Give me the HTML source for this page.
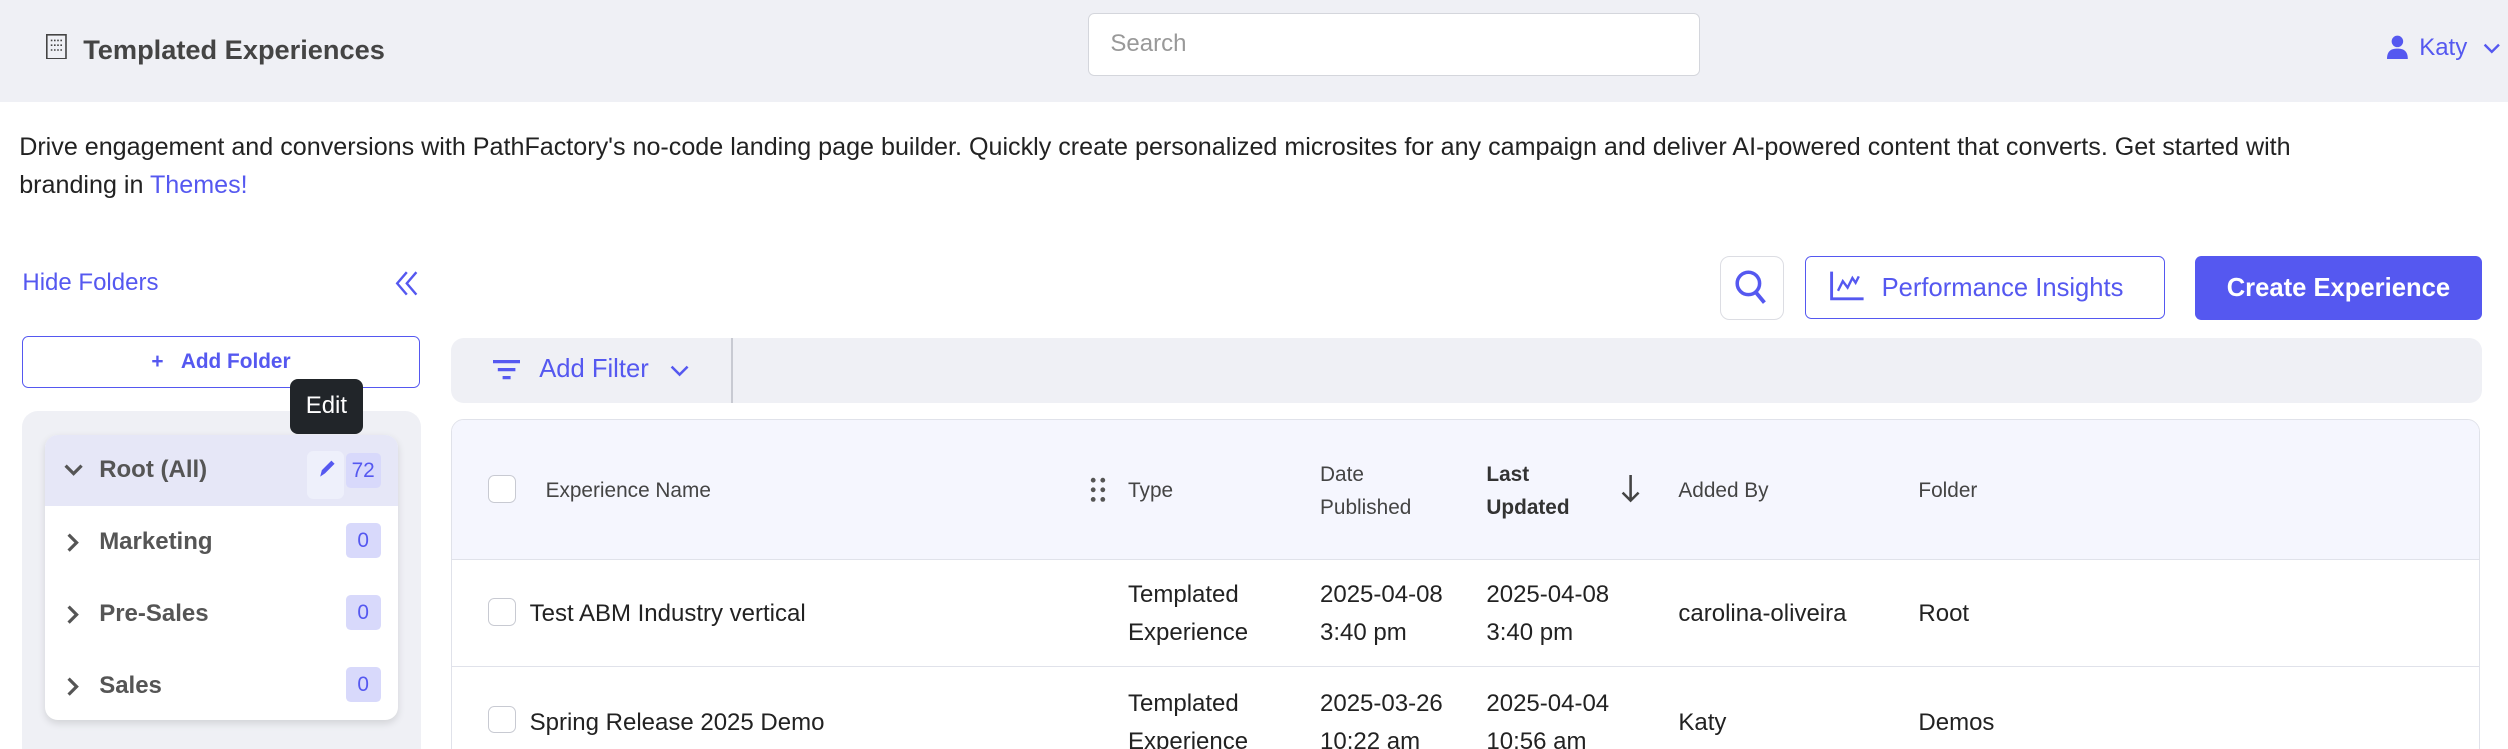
<!DOCTYPE html>
<html><head><meta charset="utf-8"><style>
html,body{margin:0;padding:0;background:#fff;}
body{width:2508px;height:748px;overflow:hidden;font-family:"Liberation Sans",sans-serif;}
#w{zoom:1.6;width:1568px;height:468px;position:relative;overflow:hidden;}
.a{position:absolute;}
.blue{color:#5558f0;}
.hd{background:#eff0f5;left:0;top:0;width:1568px;height:64px;}
.cb{width:16px;height:16px;border:1px solid #c8cad2;border-radius:4px;background:#fff;}
.th{font-size:13px;color:#444;line-height:21px;}
.td{font-size:15px;color:#222;line-height:24px;}
.badge{background:#d8d9fb;color:#5558f0;font-size:13px;border-radius:3px;width:22px;height:22px;text-align:center;line-height:22px;}
.fr{font-size:15px;color:#555;font-weight:bold;}
</style></head><body><div id="w">
<div class="a hd"></div>
<svg class="a" style="left:29px;top:21px" width="14" height="16" viewBox="0 0 14 16"><rect x="0.5" y="0.5" width="12" height="15" fill="none" stroke="#444"/><path d="M3 4h7M3 7h7M3 10h7" stroke="#444" stroke-dasharray="1 1"/></svg>
<div class="a" style="left:52px;top:21px;font-size:17px;font-weight:bold;color:#444">Templated Experiences</div>
<div class="a" style="left:680px;top:8px;width:381px;height:38px;background:#fff;border:1px solid #d4d6dc;border-radius:4px;"></div>
<div class="a" style="left:694px;top:19px;font-size:15px;color:#999">Search</div>
<svg class="a" style="left:1492px;top:22px" width="13" height="15" viewBox="0 0 13 15"><circle cx="6.5" cy="4" r="3.6" fill="#5558f0"/><path d="M0 15c0-5 2.5-6.5 6.5-6.5S13 10 13 15z" fill="#5558f0"/></svg>
<div class="a blue" style="left:1512px;top:21px;font-size:15px">Katy</div>
<svg class="a" style="left:1552px;top:27px" width="11" height="7"><path d="M1 1l4.5 4.5L10 1" stroke="#5558f0" fill="none" stroke-width="1.5"/></svg>
<div class="a" style="left:12px;top:80px;font-size:15.7px;color:#222;line-height:24px;width:1480px">Drive engagement and conversions with PathFactory's no-code landing page builder. Quickly create personalized microsites for any campaign and deliver AI-powered content that converts. Get started with branding in <span class="blue">Themes!</span></div>
<div class="a blue" style="left:14px;top:168px;font-size:15px">Hide Folders</div>
<svg class="a" style="left:246px;top:168px" width="16" height="18"><path d="M8 2L2 9l6 7M14 2L8 9l6 7" stroke="#5558f0" fill="none" stroke-width="1.5"/></svg>
<div class="a" style="left:14px;top:210px;width:247px;height:31px;border:1px solid #5558f0;border-radius:4px;text-align:center;line-height:31px;font-size:13px;font-weight:bold;color:#5558f0">+&nbsp;&nbsp;&nbsp;Add Folder</div>
<div class="a" style="left:14px;top:257px;width:249px;height:230px;background:#eff0f5;border-radius:10px;"></div>
<div class="a" style="left:28px;top:272px;width:221px;height:178px;background:#fff;border-radius:8px;box-shadow:0 2px 5px rgba(0,0,0,.12);overflow:hidden">
<div style="height:44px;background:#e6e7f7"></div></div>
<svg class="a" style="left:40px;top:290px" width="12" height="8"><path d="M1 1l5 5 5-5" stroke="#555" fill="none" stroke-width="2"/></svg>
<div class="a fr" style="left:62px;top:285px">Root (All)</div>
<div class="a" style="left:192px;top:282px;width:23px;height:30px;background:#eef0fb;border-radius:4px"></div>
<svg class="a" style="left:198px;top:287px" width="12" height="12"><path d="M2 11l1-4 6-6 2 2-6 6z" fill="#5558f0"/></svg>
<div class="a badge" style="left:216px;top:283px">72</div>
<svg class="a" style="left:42px;top:333px" width="8" height="12"><path d="M1 1l5 5-5 5" stroke="#555" fill="none" stroke-width="2"/></svg>
<div class="a fr" style="left:62px;top:330px">Marketing</div>
<div class="a badge" style="left:216px;top:327px">0</div>
<svg class="a" style="left:42px;top:378px" width="8" height="12"><path d="M1 1l5 5-5 5" stroke="#555" fill="none" stroke-width="2"/></svg>
<div class="a fr" style="left:62px;top:375px">Pre-Sales</div>
<div class="a badge" style="left:216px;top:372px">0</div>
<svg class="a" style="left:42px;top:423px" width="8" height="12"><path d="M1 1l5 5-5 5" stroke="#555" fill="none" stroke-width="2"/></svg>
<div class="a fr" style="left:62px;top:420px">Sales</div>
<div class="a badge" style="left:216px;top:417px">0</div>
<div class="a" style="left:181px;top:237px;width:46px;height:34px;background:#212529;border-radius:5px;color:#fff;font-size:15px;text-align:center;line-height:34px">Edit</div>
<div class="a" style="left:1075px;top:160px;width:39px;height:39px;border:1px solid #dcdde3;border-radius:6px;background:#fff"></div>
<svg class="a" style="left:1084px;top:168px" width="22" height="24"><circle cx="9" cy="9" r="7" stroke="#5558f0" stroke-width="2.2" fill="none"/><path d="M14 15l5 6" stroke="#5558f0" stroke-width="2.4"/></svg>
<div class="a" style="left:1128px;top:160px;width:224px;height:38px;border:1px solid #5558f0;border-radius:4px;background:#fff"></div>
<svg class="a" style="left:1144px;top:169px" width="22" height="20"><path d="M1 1v17h20" stroke="#5558f0" stroke-width="1.8" fill="none"/><path d="M5 13l3-6 3 4 3-6 2 3 2-4" stroke="#5558f0" stroke-width="1.5" fill="none"/></svg>
<div class="a blue" style="left:1176px;top:171px;font-size:16px">Performance Insights</div>
<div class="a" style="left:1372px;top:160px;width:179px;height:40px;background:#5558f0;border-radius:4px;color:#fff;font-size:16px;font-weight:bold;text-align:center;line-height:40px">Create Experience</div>
<div class="a" style="left:282px;top:211px;width:1269px;height:41px;background:#eff0f5;border-radius:8px"></div>
<div class="a" style="left:457px;top:211px;width:1px;height:41px;background:#c8cad2"></div>
<svg class="a" style="left:308px;top:225px" width="17" height="13"><path d="M0 1h17M3 6h11M6 11h5" stroke="#5558f0" stroke-width="2"/></svg>
<div class="a blue" style="left:337px;top:222px;font-size:16px">Add Filter</div>
<svg class="a" style="left:419px;top:228px" width="12" height="8"><path d="M1 1l5 5 5-5" stroke="#5558f0" fill="none" stroke-width="1.6"/></svg>
<div class="a" style="left:282px;top:262px;width:1267px;height:220px;border:1px solid #e0e2ea;border-radius:8px 8px 0 0;background:#fff;overflow:hidden">
<div style="height:87px;background:#f5f6fe;border-bottom:1px solid #e0e2ea"></div>
<div style="height:66px;border-bottom:1px solid #e0e2ea"></div></div>
<div class="a cb" style="left:305px;top:297px"></div>
<div class="a th" style="left:341px;top:296px">Experience Name</div>
<svg class="a" style="left:681px;top:298px" width="10" height="16"><g fill="#555"><circle cx="2" cy="2" r="1.5"/><circle cx="8" cy="2" r="1.5"/><circle cx="2" cy="8" r="1.5"/><circle cx="8" cy="8" r="1.5"/><circle cx="2" cy="14" r="1.5"/><circle cx="8" cy="14" r="1.5"/></g></svg>
<div class="a th" style="left:705px;top:296px">Type</div>
<div class="a th" style="left:825px;top:286px">Date<br>Published</div>
<div class="a th" style="left:929px;top:286px;font-weight:bold;color:#333">Last<br>Updated</div>
<svg class="a" style="left:1013px;top:297px" width="12" height="18"><path d="M6 0v16M1 11l5 5 5-5" stroke="#444" fill="none" stroke-width="1.6"/></svg>
<div class="a th" style="left:1049px;top:296px">Added By</div>
<div class="a th" style="left:1199px;top:296px">Folder</div>
<div class="a cb" style="left:305px;top:374px"></div>
<div class="a td" style="left:331px;top:372px">Test ABM Industry vertical</div>
<div class="a td" style="left:705px;top:360px">Templated<br>Experience</div>
<div class="a td" style="left:825px;top:360px">2025-04-08<br>3:40 pm</div>
<div class="a td" style="left:929px;top:360px">2025-04-08<br>3:40 pm</div>
<div class="a td" style="left:1049px;top:372px">carolina-oliveira</div>
<div class="a td" style="left:1199px;top:372px">Root</div>
<div class="a cb" style="left:305px;top:441px"></div>
<div class="a td" style="left:331px;top:440px">Spring Release 2025 Demo</div>
<div class="a td" style="left:705px;top:428px">Templated<br>Experience</div>
<div class="a td" style="left:825px;top:428px">2025-03-26<br>10:22 am</div>
<div class="a td" style="left:929px;top:428px">2025-04-04<br>10:56 am</div>
<div class="a td" style="left:1049px;top:440px">Katy</div>
<div class="a td" style="left:1199px;top:440px">Demos</div>
</div></body></html>
